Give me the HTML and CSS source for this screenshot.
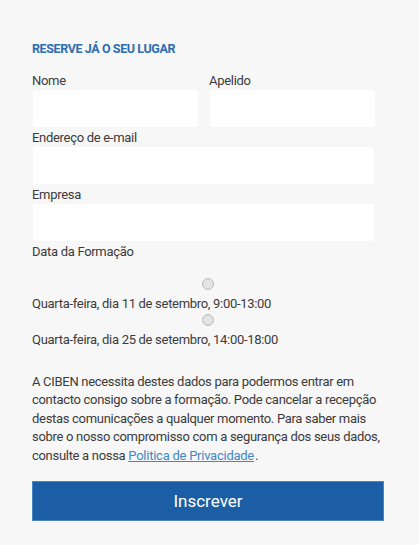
FILE: index.html
```html
<!DOCTYPE html>
<html lang="pt">
<head>
<meta charset="utf-8">
<title>Reserve já o seu lugar</title>
<link rel="stylesheet" href="styles.css">
</head>
<body>
<form class="form">
  <h2 class="title">RESERVE JÁ O SEU LUGAR</h2>
  <div class="row">
    <div class="field">
      <label class="label">Nome</label>
      <input class="input" type="text">
    </div>
    <div class="field">
      <label class="label">Apelido</label>
      <input class="input" type="text">
    </div>
  </div>
  <div class="field">
    <label class="label">Endereço de e-mail</label>
    <input class="input input-wide" type="email">
  </div>
  <div class="field">
    <label class="label">Empresa</label>
    <input class="input input-wide" type="text">
  </div>
  <div class="field">
    <label class="label">Data da Formação</label>
    <div class="options">
      <div class="option">
        <input class="radio" type="radio" name="data" id="d1">
        <label class="option-text" for="d1">Quarta-feira, dia 11 de setembro, 9:00-13:00</label>
      </div>
      <div class="option">
        <input class="radio" type="radio" name="data" id="d2">
        <label class="option-text" for="d2">Quarta-feira, dia 25 de setembro, 14:00-18:00</label>
      </div>
    </div>
  </div>
  <p class="notice">A CIBEN necessita destes dados para podermos entrar em contacto consigo sobre a formação. Pode cancelar a recepção destas comunicações a qualquer momento. Para saber mais sobre o nosso compromisso com a segurança dos seus dados, consulte a nossa <a class="link" href="#">Politica de Privacidade</a><span class="dot">.</span></p>
  <button class="submit" type="button">Inscrever</button>
</form>
</body>
</html>
```
FILE: styles.css
```css
html, body {
  margin: 0;
  padding: 0;
  background: #f7f7f7;
}
body {
  font-family: Roboto, "Liberation Sans", Arial, sans-serif;
  color: #3b3b3b;
  font-size: 13px;
  letter-spacing: -0.3px;
}
.form {
  width: 351px;
  padding: 41px 0 25px 32px;
}
.title {
  margin: 0 0 15px;
  font-size: 12.5px;
  line-height: 16px;
  font-weight: 700;
  letter-spacing: -0.4px;
  color: #2e6cb2;
}
.row {
  display: grid;
  grid-template-columns: 177px 1fr;
}
.field {
  display: block;
}
.label {
  display: block;
  line-height: 17px;
  margin-bottom: 1px;
}
.input {
  display: block;
  box-sizing: border-box;
  width: 165px;
  height: 37px;
  margin: 0 0 2px 1px;
  border: none;
  border-radius: 3px;
  background: #ffffff;
  padding: 0 8px;
  font: inherit;
}
.input-wide {
  width: 341px;
}
.options {
  padding-top: 15px;
}
.option {
  display: block;
}
.radio {
  -webkit-appearance: none;
  appearance: none;
  display: block;
  box-sizing: border-box;
  width: 12px;
  height: 12px;
  margin: 2px auto 5px;
  border: 1px solid #b9b9b9;
  border-radius: 50%;
  background: #e3e3e3;
}
.option-text {
  display: block;
  line-height: 17px;
}
.notice {
  margin: 25px 0 16px;
  line-height: 18.4px;
}
.link {
  color: #3f88c8;
  text-decoration: underline;
  letter-spacing: -0.25px;
}
.dot {
  display: inline-block;
  margin-left: 1px;
  letter-spacing: 0;
}
.submit {
  display: block;
  box-sizing: border-box;
  width: 352px;
  height: 40px;
  border: 1px solid #4b84c3;
  background: #1c5ea5;
  color: #ffffff;
  font-family: Roboto, "Liberation Sans", Arial, sans-serif;
  font-size: 17px;
  letter-spacing: 0;
  cursor: pointer;
}
```
